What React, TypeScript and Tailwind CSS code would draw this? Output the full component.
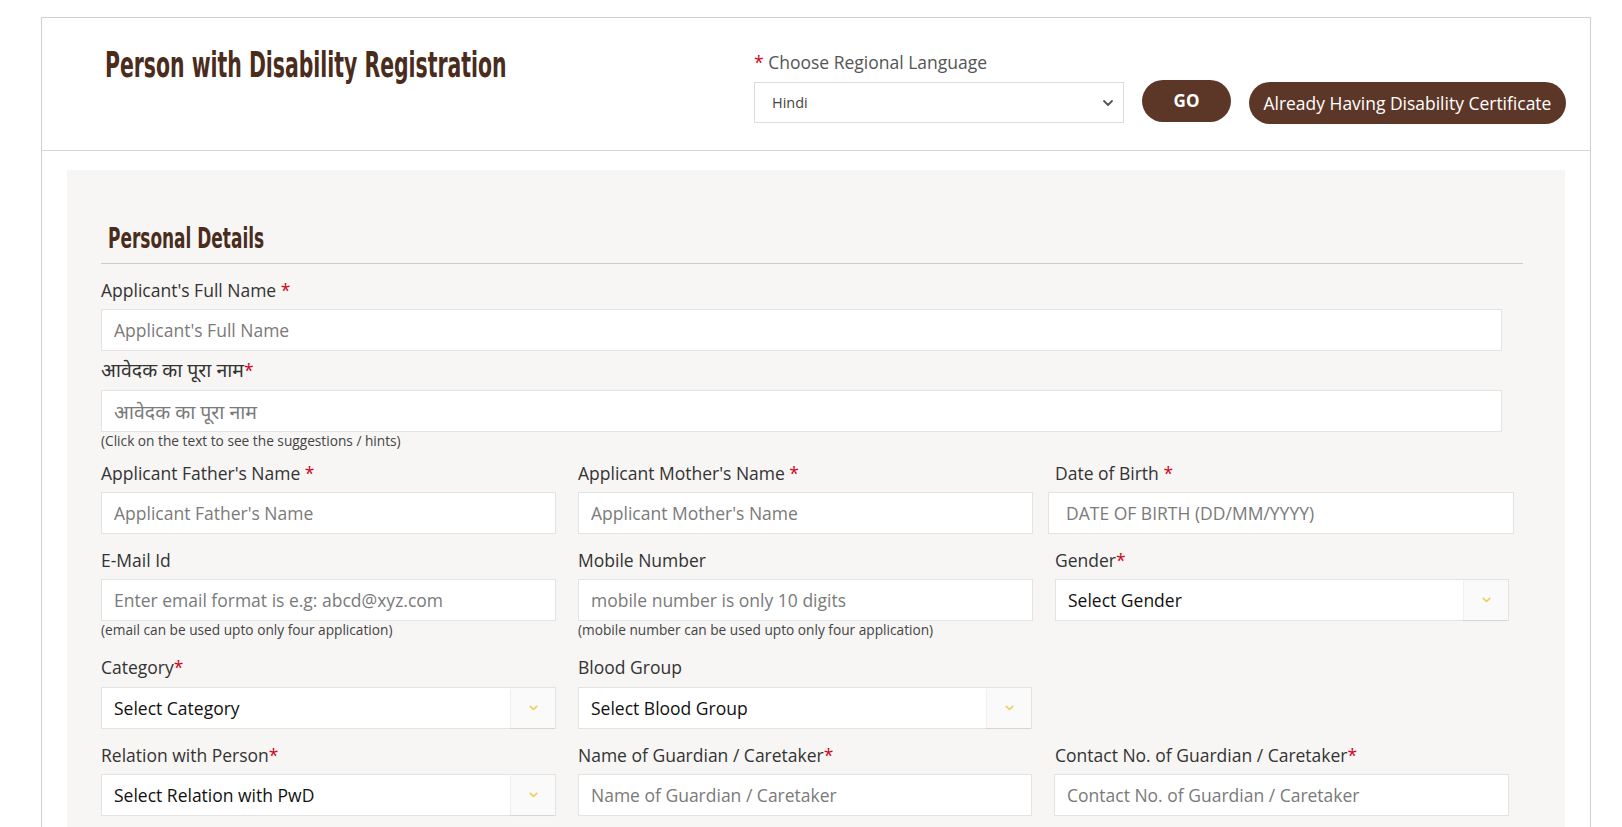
import React from "react";

const Star = () => <span className="text-[#d0021b]">*</span>;

function Label({ text, req, space = false, deva = false }: { text: string; req?: boolean; space?: boolean; deva?: boolean }) {
  return (
    <div className="h-[24px] leading-[24px] text-[17.5px] text-[#333] whitespace-nowrap">
      {deva ? <span className="text-[19.5px]">{text}</span> : text}
      {req ? (space ? " " : "") : ""}
      {req ? <Star /> : null}
    </div>
  );
}

function TextInput({ placeholder, className = "" }: { placeholder: string; className?: string }) {
  return (
    <input
      readOnly
      placeholder={placeholder}
      className={
        "block h-[42px] border border-[#e3e3e3] bg-white pl-[12px] text-[#333] placeholder:text-[#7a7a7a] outline-none " +
        className
      }
    />
  );
}

function Chevron() {
  return (
    <svg width="9" height="6" viewBox="0 0 9 6" className="block">
      <polyline points="1.3,1.3 4.5,4.5 7.7,1.3" fill="none" stroke="#efcf5a" strokeWidth="1.7" strokeLinecap="round" strokeLinejoin="round" />
    </svg>
  );
}

function FancySelect({ text, className = "" }: { text: string; className?: string }) {
  return (
    <div className={"flex h-[42px] border border-[#e3e3e3] bg-white " + className}>
      <div className="flex flex-1 items-center pl-[12px] text-[17.5px] text-[#111] whitespace-nowrap">{text}</div>
      <div className="flex w-[44px] items-center justify-center bg-[#fafafa] shadow-[-1px_1px_1px_rgba(0,0,0,0.06)]">
        <Chevron />
      </div>
    </div>
  );
}

function Hint({ text }: { text: string }) {
  return <div className="h-[18px] leading-[18px] text-[13.7px] text-[#444] whitespace-nowrap">{text}</div>;
}

export default function App() {
  const condensed = {
    fontFamily: '"DejaVu Sans Condensed", "DejaVu Sans", sans-serif',
  };
  return (
    <div
      className="min-h-screen bg-white pt-[17px] pl-[41px]"
      style={{ fontFamily: '"Open Sans", "Noto Sans Devanagari", "Noto Sans", sans-serif' }}
    >
      <div className="w-[1550px] border border-b-0 border-[#d0d0d0] pb-[40px]">
        {/* Header */}
        <div className="flex h-[133px] items-start border-b border-[#d4d4d4]">
          <div className="w-[712px] pl-[63px] pt-[30px]">
            <div
              className="inline-block origin-left scale-x-[0.648] whitespace-nowrap text-[35px] font-bold leading-none text-[#4a2c1d]"
              style={condensed}
            >
              Person with Disability Registration
            </div>
          </div>
          <div className="pt-[32px]">
            <div className="h-[24px] leading-[24px] text-[17.5px] text-[#555] whitespace-nowrap">
              <Star /> Choose Regional Language
            </div>
            <div className="mt-[8px] flex h-[41px] w-[370px] items-center justify-between border border-[#dcdcdc] bg-white pl-[17px] pr-[9px]">
              <span className="text-[14.5px] text-[#444]">Hindi</span>
              <svg width="12" height="8" viewBox="0 0 12 8" className="block">
                <polyline points="2,2 6,6 10,2" fill="none" stroke="#555" strokeWidth="1.8" strokeLinecap="round" strokeLinejoin="round" />
              </svg>
            </div>
          </div>
          <div className="ml-[18px] mt-[62px] flex h-[42px] w-[89px] items-center justify-center rounded-full bg-[#5c3728] text-[17px] font-bold text-white">
            GO
          </div>
          <div className="ml-[18px] mt-[64px] flex h-[42px] w-[317px] items-center justify-center overflow-hidden rounded-full bg-[#5c3728] text-white">
            <span className="inline-block scale-x-[0.97] whitespace-nowrap text-[18px]">Already Having Disability Certificate</span>
          </div>
        </div>

        {/* Panel */}
        <div className="ml-[25px] mt-[19px] w-[1498px] bg-[#f7f6f4] pl-[34px] pb-[20px]">
          <div className="flex h-[94px] w-[1422px] items-end border-b border-[#cccccc] pb-[10px] pl-[7px]">
            <div
              className="inline-block origin-left scale-x-[0.65] whitespace-nowrap text-[29px] font-bold leading-none text-[#4a2c1d]"
              style={condensed}
            >
              Personal Details
            </div>
          </div>

          <div className="mt-[14px]">
            <Label text="Applicant's Full Name" req space />
            <TextInput placeholder="Applicant's Full Name" className="mt-[7px] w-[1401px] text-[17.5px]" />
            <div className="mt-[7px]">
              <Label text="आवेदक का पूरा नाम" req deva />
            </div>
            <TextInput placeholder="आवेदक का पूरा नाम" className="mt-[8px] w-[1401px] text-[19.5px]" />
            <Hint text="(Click on the text to see the suggestions / hints)" />
          </div>

          {/* Row: Father / Mother / DOB */}
          <div className="mt-[11px] grid grid-cols-[455px_455px_455px] gap-x-[22px]">
            <div>
              <Label text="Applicant Father's Name" req space />
              <TextInput placeholder="Applicant Father's Name" className="mt-[7px] w-full text-[17.5px]" />
            </div>
            <div>
              <Label text="Applicant Mother's Name" req space />
              <TextInput placeholder="Applicant Mother's Name" className="mt-[7px] w-full text-[17.5px]" />
            </div>
            <div>
              <Label text="Date of Birth" req space />
              <TextInput placeholder="DATE OF BIRTH (DD/MM/YYYY)" className="mt-[7px] ml-[-7px] w-[466px] pl-[17px] text-[17.5px]" />
            </div>
          </div>

          {/* Row: Email / Mobile / Gender */}
          <div className="mt-[14px] grid grid-cols-[455px_455px_455px] gap-x-[22px]">
            <div>
              <Label text="E-Mail Id" />
              <TextInput placeholder="Enter email format is e.g: abcd@xyz.com" className="mt-[7px] w-full text-[17.5px]" />
              <Hint text="(email can be used upto only four application)" />
            </div>
            <div>
              <Label text="Mobile Number" />
              <TextInput placeholder="mobile number is only 10 digits" className="mt-[7px] w-full text-[17.5px]" />
              <Hint text="(mobile number can be used upto only four application)" />
            </div>
            <div>
              <Label text="Gender" req />
              <FancySelect text="Select Gender" className="mt-[7px] w-[454px]" />
            </div>
          </div>

          {/* Row: Category / Blood Group */}
          <div className="mt-[16px] grid grid-cols-[455px_455px_455px] gap-x-[22px]">
            <div>
              <Label text="Category" req />
              <FancySelect text="Select Category" className="mt-[8px] w-full" />
            </div>
            <div>
              <Label text="Blood Group" />
              <FancySelect text="Select Blood Group" className="mt-[8px] w-[454px]" />
            </div>
            <div />
          </div>

          {/* Row: Relation / Guardian / Contact */}
          <div className="mt-[14px] grid grid-cols-[455px_455px_455px] gap-x-[22px]">
            <div>
              <Label text="Relation with Person" req />
              <FancySelect text="Select Relation with PwD" className="mt-[7px] w-full" />
            </div>
            <div>
              <Label text="Name of Guardian / Caretaker" req />
              <TextInput placeholder="Name of Guardian / Caretaker" className="mt-[7px] w-[454px] text-[17.5px]" />
            </div>
            <div>
              <Label text="Contact No. of Guardian / Caretaker" req />
              <TextInput placeholder="Contact No. of Guardian / Caretaker" className="mt-[7px] ml-[-1px] w-[455px] text-[17.5px]" />
            </div>
          </div>
        </div>
      </div>
    </div>
  );
}
